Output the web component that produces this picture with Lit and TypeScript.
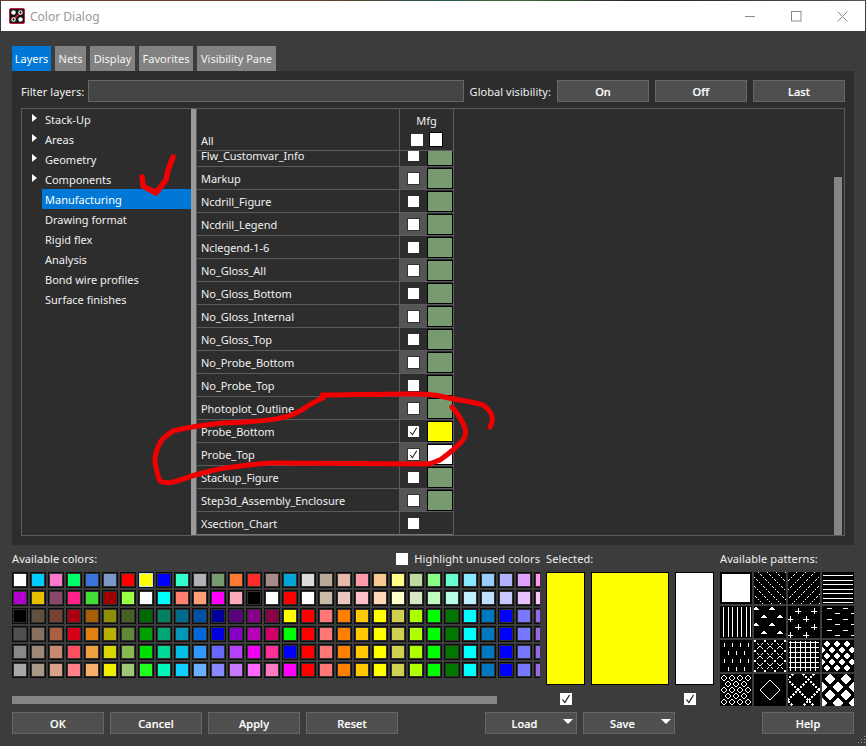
import { LitElement, html, svg, css } from "lit";
import { customElement } from "lit/decorators.js";

const COLORS: string[][] = [
  ["#ffffff","#00ccff","#ff77cc","#00ff66","#3a74d8","#7a98c8","#ff0000","#ffff00","#0000ff","#33ffcc","#b0b0b8","#789a70","#ff7a30","#ff2a2a","#a88a88","#00a5d5","#dcdcdc","#b8a898","#e8b8a8","#ff9aa8","#f8c890","#ffff88","#c0d8a0","#88ff80","#66ffd0","#88e8ff","#99ccff","#b0b0ff","#e0a0ff","#ff99ee"],
  ["#b000cc","#e8c000","#8a4868","#ff2288","#44dd33","#a00000","#99ff44","#ffffff","#00ffff","#ff8070","#ffa078","#ff00ff","#ffaabb","#000000","#ffffff","#ff0000","#ffffff","#c8bca8","#ecc8c0","#ffc0cc","#fcd8b8","#ffffcc","#d8e8c4","#c0ffc0","#b8ffe8","#c0f0ff","#c0e0ff","#c8c8ff","#e8c0ff","#ffc8f8"],
  ["#000000","#605040","#784030","#a80010","#a86008","#909008","#486028","#006800","#008060","#006c8c","#0050a8","#000098","#580080","#880088","#880048","#ffff00"],
  ["#505050","#887060","#a86040","#d80018","#e08010","#b8b000","#608838","#00a000","#00a878","#0098b8","#0068d8","#0000e0","#8800c8","#b800b8","#d00068","#00ff00"],
  ["#888888","#a08878","#c88870","#ff5060","#f0a040","#d8d800","#88b850","#00e000","#00d898","#00c0e8","#3098ff","#6868ff","#b840ff","#f000f0","#ff3098","#0000ff"],
  ["#a8a8a8","#a89888","#d8a088","#ff8088","#f8b068","#f0f000","#a0c878","#20ff20","#00f8b8","#10d0ff","#68b0ff","#8888ff","#c878ff","#ff68ff","#ff78c0","#ff00ff"],
];
const RAMP = ["#ff0000","#ff7777","#ff8000","#ffc800","#ffff00","#d0d050","#b0ff00","#00ff00","#007800","#00ffff","#0078c0","#0000ff","#7878ff","#9868f0"];
for (let r = 2; r < 6; r++) COLORS[r] = COLORS[r].concat(RAMP);

interface Row { name: string; color?: string; checked?: boolean; }
const GREEN = "#789a70";
const ROWS: Row[] = [
  { name: "Flw_Customvar_Info", color: GREEN },
  { name: "Markup", color: GREEN },
  { name: "Ncdrill_Figure", color: GREEN },
  { name: "Ncdrill_Legend", color: GREEN },
  { name: "Nclegend-1-6", color: GREEN },
  { name: "No_Gloss_All", color: GREEN },
  { name: "No_Gloss_Bottom", color: GREEN },
  { name: "No_Gloss_Internal", color: GREEN },
  { name: "No_Gloss_Top", color: GREEN },
  { name: "No_Probe_Bottom", color: GREEN },
  { name: "No_Probe_Top", color: GREEN },
  { name: "Photoplot_Outline", color: GREEN },
  { name: "Probe_Bottom", color: "#ffff00", checked: true },
  { name: "Probe_Top", color: "#ffffff", checked: true },
  { name: "Stackup_Figure", color: GREEN },
  { name: "Step3d_Assembly_Enclosure", color: GREEN },
  { name: "Xsection_Chart" },
];

const TREE = [
  { t: "Stack-Up", arrow: true }, { t: "Areas", arrow: true }, { t: "Geometry", arrow: true },
  { t: "Components", arrow: true }, { t: "Manufacturing", sel: true }, { t: "Drawing format" },
  { t: "Rigid flex" }, { t: "Analysis" }, { t: "Bond wire profiles" }, { t: "Surface finishes" },
];

const TABS: [string, number][] = [["Layers", 39], ["Nets", 31], ["Display", 45], ["Favorites", 54], ["Visibility Pane", 79]];

const diag = (step: number, back: boolean, off = 0) => {
  let d = "";
  for (let k = -32 + off; k < 32; k += step) {
    d += back ? `M${k} 0L${k + 32} 32` : `M${k + 32} 0L${k} 32`;
  }
  return d;
};
const tri = (x: number, y: number) => `M${x - 3} ${y + 1.5}L${x} ${y - 1.5}L${x + 3} ${y + 1.5}Z`;
const plus = (x: number, y: number) => `M${x - 3} ${y}H${x + 3}M${x} ${y - 3}V${y + 3}`;
const dia = (x: number, y: number, r: number) => `M${x - r} ${y}L${x} ${y - r}L${x + r} ${y}L${x} ${y + r}Z`;
const ring = (x: number, y: number, r: number) => `M${x - r} ${y}a${r} ${r} 0 1 0 ${2 * r} 0a${r} ${r} 0 1 0 ${-2 * r} 0Z`;
const each = (pts: number[][], f: (x: number, y: number) => string) => pts.map(([x, y]) => f(x, y)).join("");
const LINES = [3.5, 8.5, 12.5, 17.5, 21.5, 26.5, 30.5];
const GRID = [2.5, 7.5, 12.5, 17.5, 22.5, 27.5];
const stag = (xs: number[], xs2: number[], ys: number[]) =>
  ys.flatMap((y, i) => (i % 2 ? xs2 : xs).map((x) => [x, y]));

const PATTERNS: { fill?: string; line?: string; w?: number; dash?: string }[] = [
  { fill: "M2 2H30V30H2Z" },
  { line: diag(9, true), dash: "1.4 1" },
  { line: diag(9, false), dash: "1.4 1" },
  { line: LINES.map((y) => `M1 ${y}H31`).join("") },
  { line: LINES.map((x) => `M${x} 1V31`).join("") },
  { fill: each([[2, 2], [18, 2], [10, 10], [26, 10], [2, 18], [18, 18], [10, 26], [26, 26]], tri) },
  { line: each([[10, 5], [26, 5], [2, 13], [18, 13], [10, 21], [26, 21], [2, 29], [18, 29]], plus) },
  { line: [[7, 2.5], [23, 2.5], [15, 7.5], [31, 7.5], [7, 13.5], [23, 13.5], [15, 18.5], [31, 18.5], [7, 24.5], [23, 24.5], [15, 29.5], [31, 29.5]].map(([x, y]) => `M${x - 2.5} ${y}h5`).join("") },
  { line: [[4.5, 5], [12.5, 5], [20.5, 5], [28.5, 5], [8.5, 13], [16.5, 13], [24.5, 13], [4.5, 21], [12.5, 21], [20.5, 21], [28.5, 21], [8.5, 29], [16.5, 29], [24.5, 29]].map(([x, y]) => `M${x} ${y - 2}v4`).join("") },
  { line: diag(10, true, 2) + diag(10, false, 2), dash: "1.4 0.6" },
  { line: GRID.map((v) => `M${v} 1V31M1 ${v}H31`).join("") },
  { fill: each(stag([5, 15, 25], [0, 10, 20, 30], [4, 10, 16, 22, 28]), (x, y) => dia(x, y, 3.5)) },
  { line: each(stag([4, 12, 20, 28], [8, 16, 24], [4, 10, 16, 22, 28]), (x, y) => ring(x, y, 2.2)) },
  { line: dia(16, 16, 10) },
  { line: diag(21, true, 5) + diag(21, false, 5), w: 2, dash: "2 1.5" },
  { fill: each(stag([8, 24], [0, 16, 32], [5, 13, 21, 29]), (x, y) => dia(x, y, 5.5)) },
];

const RED = "M490 427C494 420 494 413 483 405C470 401 455 400 440 396C425 393 400 394 322 395L323 398C312 402 306 408 298 412C285 419 270 421 223 423C200 425 185 428 173 431C166 436 162 438 160 443C156 450 155 455 155 462C157 472 158 478 160 481C165 483 170 483 173 482C182 480 188 477 195 475C210 471 220 468 233 467C250 465 262 463 273 463L427 464C434 463 436 461 440 460C447 455 456 448 463 440C466 436 466 432 465 428C462 420 458 414 452 407";
const CHECK = "M142 177L143 186L156 193L166 180L168 170L173 157";

@customElement("app-root")
export class AppRoot extends LitElement {
  static styles = css`
    :host { display: block; width: 866px; height: 746px; position: relative; overflow: hidden; background: #3c3c3c; font-family: "Noto Sans", sans-serif; font-size: 11px; color: #f0f0f0; letter-spacing: 0.1px; }
    .strip { height: 1px; background: linear-gradient(90deg, #6e3f2e 0 300px, #2c5a48 440px, #3e6a3a 520px, #222 640px, #555 866px); }
    .title { height: 30px; margin: 0 1px; background: #fff; display: flex; align-items: center; color: #999; font-size: 12px; letter-spacing: 0; }
    .logo { margin: 0 5px 0 8px; display: block; }
    .title-text { flex: 1; }
    .wc { width: 46px; height: 30px; display: flex; align-items: center; justify-content: center; }
    .content { padding: 15px 12px 0; }
    .tabs { display: flex; gap: 4px; height: 25px; }
    .tab { background: #828282; color: #f4f4f4; display: flex; align-items: center; justify-content: center; letter-spacing: 0; }
    .tab.on { background: #0078d7; color: #fff; }
    .panel { background: #2d2d2d; height: 474px; padding: 9px 9px 0; box-sizing: border-box; }
    .filter { display: flex; height: 22px; align-items: center; gap: 6px; }
    .filter label { white-space: nowrap; letter-spacing: 0.05px; }
    .flabel { width: 61px; }
    .input { flex: 1; height: 22px; box-sizing: border-box; background: #444; border: 1px solid #666; }
    .btn { box-sizing: border-box; flex: none; width: 92px; height: 22px; background: #4f4f4f; border: 1px solid #666; color: #fff; display: flex; align-items: center; justify-content: center; font-weight: 500; -webkit-text-stroke: 0.2px #fff; }
    .main { margin-top: 6px; height: 428px; box-sizing: border-box; border: 1px solid #5c5c5c; display: flex; }
    .tree { width: 169px; letter-spacing: 0; }
    .ti { height: 20px; display: flex; align-items: center; padding-left: 20px; }
    .ti .t { flex: 1; height: 20px; display: flex; align-items: center; padding-left: 3px; }
    .ti.cur .t { background: #0078d7; color: #fff; }
    .arrow { width: 0; height: 0; border-left: 5px solid #fff; border-top: 4px solid transparent; border-bottom: 4px solid transparent; margin: -2px 5px 0 -10px; }
    .split { width: 5px; background: #9a9a9a; }
    .table { width: 258px; box-sizing: border-box; border-left: 1px solid #5c5c5c; border-right: 1px solid #5c5c5c; flex: none; letter-spacing: -0.05px; }
    .head { height: 42px; box-sizing: border-box; border-bottom: 1px solid #5c5c5c; display: flex; }
    .hn { width: 203px; box-sizing: border-box; border-right: 1px solid #5c5c5c; display: flex; align-items: flex-end; padding: 0 0 2px 4px; }
    .hc { flex: 1; display: flex; flex-direction: column; align-items: center; padding-top: 4px; }
    .hc .mfg { height: 19px; }
    .hboxes { display: flex; gap: 6px; align-items: center; padding-left: 1px; }
    .b1 { width: 12px; height: 12px; background: #fff; flex: none; }
    .b2 { width: 12px; height: 13px; background: #fff; border: 1px solid #000; }
    .body { height: 384px; overflow: hidden; }
    .rows { margin-top: -7px; }
    .row { height: 23px; box-sizing: border-box; border-bottom: 1px solid #5c5c5c; display: flex; }
    .rows .row:last-child { height: 24px; border-bottom: 2px solid #777; }
    .rn { width: 203px; box-sizing: border-box; border-right: 1px solid #5c5c5c; padding-left: 4px; display: flex; align-items: center; }
    .rc { width: 27px; display: flex; align-items: center; justify-content: center; }
    .row.alt .rc { background: #555; }
    .rs { flex: 1; box-sizing: border-box; margin-top: 1px; border: 1px solid #000; }
    .rs.none { border: 0; }
    .cb { width: 11px; height: 11px; background: #fff; display: flex; flex: none; }
    .row.alt .cb { border: 1px solid #333; }
    .cb svg { display: block; width: 100%; height: 100%; }
    .right { flex: 1; display: flex; justify-content: flex-end; padding: 68px 2px 0 0; }
    .vbar { width: 8px; background: #868686; }
    .bottom { display: flex; gap: 6px; height: 159px; }
    .colL { width: 528px; }
    .lbl { height: 27px; display: flex; align-items: center; justify-content: space-between; }
    .hl { display: flex; align-items: center; gap: 6px; }
    .grid { width: 528px; height: 108px; overflow: hidden; display: grid; grid-template-columns: repeat(30, 16px); grid-auto-rows: 16px; gap: 2px; }
    .sw { box-sizing: border-box; width: 16px; height: 16px; border: 1px solid #0c0c0c; box-shadow: inset 0 0 0 1px #303030; }
    .sw.cur { border-color: #101010; box-shadow: inset 0 0 0 1px #c4e0f4; }
    .hbar { margin-top: 16px; width: 485px; height: 8px; background: #868686; }
    .colS { width: 168px; }
    .previews { display: flex; gap: 6px; height: 113px; }
    .pv { box-sizing: border-box; height: 113px; width: 39px; border: 1px solid #000; }
    .pv.mid { width: 78px; }
    .selchk { display: flex; margin-top: 8px; }
    .selchk .c { width: 39px; display: flex; justify-content: center; }
    .selchk .g { width: 85px; }
    .selchk .cb { width: 12px; height: 12px; }
    .colP { width: 134px; }
    .pgrid { display: grid; grid-template-columns: repeat(4, 32px); grid-auto-rows: 32px; gap: 2px; }
    .pgrid svg { display: block; width: 32px; height: 32px; background: #000; }
    .actions { display: flex; margin-top: 8px; gap: 6px; }
    .sp { width: 75px; flex: none; }
    .dd { justify-content: flex-start; }
    .dd .t { flex: 1; text-align: center; }
    .dd .tr { width: 0; height: 0; border-left: 5px solid transparent; border-right: 5px solid transparent; border-top: 5px solid #fff; margin: -4px 3px 0 0; }
    .overlay { position: absolute; left: 0; top: 0; width: 866px; height: 746px; pointer-events: none; }
  `;

  private tick() {
    return html`<svg viewBox="0 0 12 12"><path d="M2.5 6.5L4.8 9.5L9.5 2" fill="none" stroke="#111" stroke-width="1.1"/></svg>`;
  }

  render() {
    return html`
      <div class="strip"></div>
      <div class="title">
        <svg class="logo" width="16" height="16" viewBox="0 0 16 16">
          <rect x="0.5" y="0.5" width="15" height="15" rx="1.5" fill="#141414" stroke="#c41e3a"/>
          <path d="M5 11L11 5" stroke="#d0203c" stroke-width="1.6"/>
          <circle cx="4.5" cy="4.5" r="2.2" fill="#fff"/>
          <circle cx="11.5" cy="4.5" r="1.7" fill="none" stroke="#fff" stroke-width="1.1"/>
          <circle cx="4.5" cy="11.5" r="1.7" fill="none" stroke="#fff" stroke-width="1.1"/>
          <circle cx="11.5" cy="11.5" r="2.2" fill="#fff"/>
        </svg>
        <span class="title-text">Color Dialog</span>
        <div class="wc"><svg width="11" height="11" viewBox="0 0 11 11"><path d="M0 5.5H10" stroke="#8a8a8a"/></svg></div>
        <div class="wc"><svg width="11" height="11" viewBox="0 0 11 11"><rect x="0.5" y="0.5" width="9.5" height="9.5" fill="none" stroke="#8a8a8a"/></svg></div>
        <div class="wc"><svg width="11" height="11" viewBox="0 0 11 11"><path d="M0.5 0.5L10.5 10.5M10.5 0.5L0.5 10.5" stroke="#8a8a8a"/></svg></div>
      </div>
      <div class="content">
        <div class="tabs">
          ${TABS.map(([t, w], i) => html`<div class="tab ${i === 0 ? "on" : ""}" style="width:${w}px">${t}</div>`)}
        </div>
        <div class="panel">
          <div class="filter">
            <label class="flabel">Filter layers:</label>
            <div class="input"></div>
            <label>Global visibility:</label>
            <div class="btn">On</div><div class="btn">Off</div><div class="btn">Last</div>
          </div>
          <div class="main">
            <div class="tree">
              ${TREE.map(
                (n) => html`<div class="ti ${n.sel ? "cur" : ""}">${n.arrow ? html`<span class="arrow"></span>` : ""}<span class="t">${n.t}</span></div>`
              )}
            </div>
            <div class="split"></div>
            <div class="table">
              <div class="head">
                <div class="hn">All</div>
                <div class="hc"><span class="mfg">Mfg</span><div class="hboxes"><div class="b1"></div><div class="b2"></div></div></div>
              </div>
              <div class="body">
                <div class="rows">
                  ${ROWS.map(
                    (r, i) => html`<div class="row ${i % 2 ? "alt" : ""}">
                      <div class="rn">${r.name}</div>
                      <div class="rc"><div class="cb">${r.checked ? this.tick() : ""}</div></div>
                      ${r.color
                        ? html`<div class="rs" style="background:${r.color}"></div>`
                        : html`<div class="rs none"></div>`}
                    </div>`
                  )}
                </div>
              </div>
            </div>
            <div class="right"><div class="vbar"></div></div>
          </div>
        </div>
        <div class="bottom">
          <div class="colL">
            <div class="lbl"><span>Available colors:</span><span class="hl"><span class="b1"></span>Highlight unused colors</span></div>
            <div class="grid">
              ${COLORS.flatMap((row, r) =>
                row.map(
                  (c, i) => html`<div class="sw ${r === 0 && i === 7 ? "cur" : ""}" style="background:${c}"></div>`
                )
              )}
            </div>
            <div class="hbar"></div>
          </div>
          <div class="colS">
            <div class="lbl">Selected:</div>
            <div class="previews">
              <div class="pv" style="background:#ffff00"></div>
              <div class="pv mid" style="background:#ffff00"></div>
              <div class="pv" style="background:#ffffff"></div>
            </div>
            <div class="selchk">
              <div class="c"><div class="cb">${this.tick()}</div></div>
              <div class="g"></div>
              <div class="c"><div class="cb">${this.tick()}</div></div>
            </div>
          </div>
          <div class="colP">
            <div class="lbl">Available patterns:</div>
            <div class="pgrid">
              ${PATTERNS.map(
                (p) => html`<svg viewBox="0 0 32 32" shape-rendering="crispEdges">
                  ${p.fill ? svg`<path d=${p.fill} fill="#fff"/>` : ""}
                  ${p.line
                    ? svg`<path d=${p.line} fill="none" stroke="#fff" stroke-width=${p.w ?? 1} stroke-dasharray=${p.dash ?? "none"}/>`
                    : ""}
                </svg>`
              )}
            </div>
          </div>
        </div>
        <div class="actions">
          <div class="btn">OK</div><div class="btn">Cancel</div><div class="btn">Apply</div><div class="btn">Reset</div>
          <div class="sp"></div>
          <div class="btn dd"><span class="t">Load</span><span class="tr"></span></div>
          <div class="btn dd"><span class="t">Save</span><span class="tr"></span></div>
          <div class="sp"></div>
          <div class="btn">Help</div>
        </div>
      </div>
      <svg class="overlay" viewBox="0 0 866 746">
        <path d=${RED} fill="none" stroke="#f00000" stroke-width="5" stroke-linejoin="round" stroke-linecap="round"/>
        <path d=${CHECK} fill="none" stroke="#f00000" stroke-width="5.5" stroke-linejoin="round" stroke-linecap="round"/>
        <path d="M864 736h1v1h-1zM861 739h1v1h-1zM864 739h1v1h-1zM858 742h1v1h-1zM861 742h1v1h-1zM864 742h1v1h-1z" fill="#999"/>
      </svg>
    `;
  }
}
